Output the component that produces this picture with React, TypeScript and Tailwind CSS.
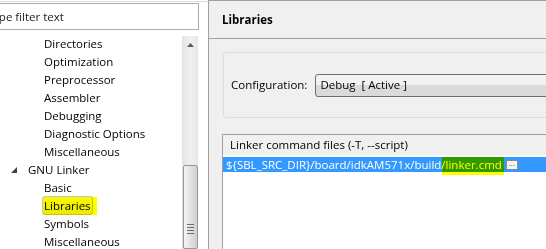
import React from "react";

type TreeRow = { label: string; depth: 1 | 2; open?: boolean; marked?: boolean };

const rows: TreeRow[] = [
  { label: "Directories", depth: 2 },
  { label: "Optimization", depth: 2 },
  { label: "Preprocessor", depth: 2 },
  { label: "Assembler", depth: 2 },
  { label: "Debugging", depth: 2 },
  { label: "Diagnostic Options", depth: 2 },
  { label: "Miscellaneous", depth: 2 },
  { label: "GNU Linker", depth: 1, open: true },
  { label: "Basic", depth: 2 },
  { label: "Libraries", depth: 2, marked: true },
  { label: "Symbols", depth: 2 },
  { label: "Miscellaneous", depth: 2 },
];

function Scrollbar() {
  return (
    <div className="flex w-[16px] shrink-0 flex-col border-l border-[#e3e3e3] bg-gradient-to-r from-[#e6e6e6] via-[#f0f0f0] to-[#e6e6e6]">
      {/* up arrow */}
      <div className="flex h-[17px] items-center justify-center">
        <svg width="7" height="4" viewBox="0 0 7 4">
          <path d="M3.5 0 L7 4 L0 4 Z" fill="#5b5b5b" />
        </svg>
      </div>
      <div className="h-[112px]" />
      {/* thumb */}
      <div className="flex flex-1 flex-col items-center rounded-[2px] border border-[#979797] bg-gradient-to-r from-[#f4f4f4] via-[#e2e2e2] to-[#cfcfcf] pt-[58px]">
        <div className="flex flex-col gap-[2px]">
          <div className="h-px w-[7px] bg-[#6b6b6b]" />
          <div className="h-px w-[7px] bg-[#6b6b6b]" />
          <div className="h-px w-[7px] bg-[#6b6b6b]" />
          <div className="h-px w-[7px] bg-[#6b6b6b]" />
        </div>
      </div>
    </div>
  );
}

function Tree() {
  return (
    <ul className="min-w-0 flex-1">
      {rows.map((r, i) => (
        <li
          key={i}
          className={
            "flex h-[18px] items-center whitespace-nowrap " +
            (r.depth === 1 ? "pl-[10px]" : "pl-[42px]")
          }
        >
          {r.depth === 1 && (
            <svg width="8" height="8" viewBox="0 0 8 8" className="mr-[8px]">
              <path d="M7 1 L7 7 L1 7 Z" fill="#404040" />
            </svg>
          )}
          {r.marked ? (
            <span className="relative">
              <span className="rounded-[3px] border border-[#c6c6c6] bg-gradient-to-b from-[#fafafa] to-[#ebebeb] px-[1px] py-[1px]">
                {r.label}
              </span>
              {/* highlighter stroke */}
              <span className="absolute top-[-3px] left-[1px] h-[18px] w-[54px] bg-[#ffff00] mix-blend-multiply" />
            </span>
          ) : (
            <span className="px-[2px]">{r.label}</span>
          )}
        </li>
      ))}
    </ul>
  );
}

export default function App() {
  return (
    <div className="flex h-[249px] w-[546px] overflow-hidden bg-[#f0f0f0] font-['Segoe_UI','Open_Sans',sans-serif] text-[11.5px] leading-none text-black">
      {/* left: filter + tree */}
      <div className="flex w-[208px] shrink-0 flex-col overflow-hidden bg-white">
        <div className="mt-[1px] border-t border-[#dadada]" />
        <div className="mt-[1px] mr-[9px] flex h-[27px] items-center border border-l-0 border-[#abadb3]">
          <span className="-ml-[11px] whitespace-nowrap text-[#222]">type filter text</span>
        </div>
        <div className="mt-[5px] mr-[10px] flex min-h-0 flex-1">
          <div className="flex-1 pt-0">
            <Tree />
          </div>
          <div className="mt-px flex">
            <Scrollbar />
          </div>
        </div>
      </div>

      <div className="w-px shrink-0 bg-[#a0a0a0]" />

      {/* right: property page */}
      <div className="flex min-w-0 flex-1 flex-col">
        <div className="flex h-[39px] shrink-0 items-center border-y border-[#a0a0a0] pl-[13px]">
          <span className="font-bold">Libraries</span>
        </div>

        <div className="mt-[13px] -mr-[10px] ml-[14px] flex h-[66px] shrink-0 items-center rounded-[3px] border border-[#d5dfe5] pl-[7px]">
          <span className="mr-[8px]">Configuration:</span>
          <div className="flex h-[23px] w-[260px] items-center rounded-[3px] border border-[#707070] bg-gradient-to-b from-[#f2f2f2] from-50% to-[#dadada] to-50% pl-[4px]">
            Debug&nbsp;&nbsp;[ Active ]
          </div>
        </div>

        <div className="mt-[16px] -mr-[10px] ml-[13px] flex min-h-0 flex-1 flex-col border-t border-l border-[#a0a0a0]">
          <div className="flex h-[20px] shrink-0 items-center bg-[#f0f0f0] pl-[7px]">
            Linker command files (-T, --script)
          </div>
          <div className="flex-1 bg-white pt-[2px]">
            <div className="flex h-[15px] items-center bg-[#3399ff] pl-[3px] whitespace-nowrap text-white">
              <span>{"${SBL_SRC_DIR}/board/idkAM571x/build/"}</span>
              <span className="relative">
                linker.cmd
                <span className="absolute top-[-2px] left-[-4px] h-[18px] w-[62px] bg-[#ffff00] mix-blend-multiply" />
              </span>
              <span className="ml-[4px] flex h-[10px] w-[12px] items-center justify-center border border-[#8a8a8a] bg-[#f4f4f4] text-[8px] leading-none text-[#1b3c8c]">
                ···
              </span>
            </div>
          </div>
        </div>
      </div>
    </div>
  );
}
